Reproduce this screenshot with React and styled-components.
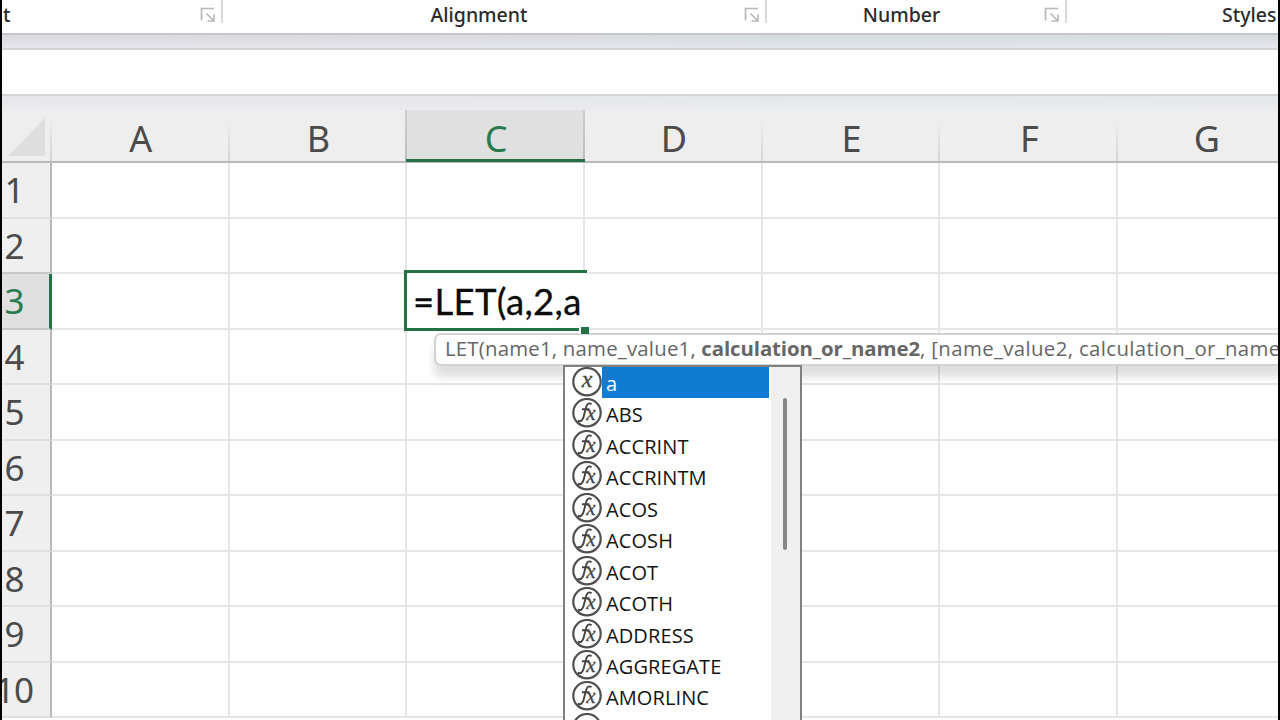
import React from "react";
import styled, { createGlobalStyle } from "styled-components";

const Global = createGlobalStyle`
  * { box-sizing: border-box; }
  html, body { margin: 0; background: #000; overflow: hidden; }
`;

const Window = styled.div`
  position: relative;
  width: 1276px;
  height: 720px;
  margin: 0 2px;
  overflow: hidden;
  display: flex;
  flex-direction: column;
  background: #fff;
  font-family: "Open Sans", "Noto Sans", sans-serif;
`;

const Ribbon = styled.div`
  display: flex;
  flex: none;
  height: 35px;
  background: #fefefe;
  border-bottom: 2px solid #c6c6ca;
`;

const RibbonGroup = styled.div`
  position: relative;
  flex: none;
  display: flex;
  justify-content: ${(p) => p.$align || "center"};
  width: ${(p) => p.$width}px;
  height: 23px;
  padding-left: ${(p) => p.$pad || 0}px;
  padding-right: ${(p) => p.$padRight || 0}px;
  border-right: 2px solid #dadada;
`;

const GroupName = styled.span`
  font-family: "Noto Sans", sans-serif;
  font-size: 19.5px;
  font-weight: 500;
  line-height: 30px;
  color: #2b2b2b;
  white-space: nowrap;
`;

const Launcher = styled.svg`
  position: absolute;
  right: 5px;
  top: 7px;
  width: 16px;
  height: 16px;
`;

const Band = styled.div`
  flex: none;
  height: ${(p) => p.$height}px;
  background: linear-gradient(180deg, ${(p) => p.$fade}), linear-gradient(90deg, #e7e6ec, #e6e7ec 40%, #e2e7eb 60%, #e4e8ec);
`;

const FormulaBar = styled.div`
  flex: none;
  height: 48px;
  background: #fefefe;
  border-top: 2px solid #d3d3d5;
  border-bottom: 2px solid #d6d6d9;
`;

const HeaderRow = styled.div`
  display: flex;
  flex: none;
  height: 53px;
  background: #eeeeee;
  border-bottom: 2px solid #b9b9b9;
`;

const SelectAll = styled.div`
  flex: none;
  display: flex;
  align-items: flex-end;
  width: 50px;
  padding: 0 0 5px 6px;
  border-right: 2px solid;
  border-image: linear-gradient(180deg, #eeeeee 20%, #cfcfcf) 1;
`;

const Corner = styled.div`
  width: 37px;
  height: 38px;
  background: #dedede;
  clip-path: polygon(100% 0, 100% 100%, 0 100%);
`;

const ColumnHeader = styled.div`
  position: relative;
  flex: none;
  width: 177.7px;
  height: ${(p) => (p.$active ? 52 : 51)}px;
  padding: 3px 0 0 2px;
  text-align: center;
  font-family: "Noto Sans", sans-serif;
  font-size: 36px;
  line-height: 51px;
  color: ${(p) => (p.$active ? "#2b7a50" : "#4b4b4b")};
  background: ${(p) => (p.$active ? "#e0e0e0" : "transparent")};
  border-right: 2px solid;
  border-image: ${(p) =>
      p.$edge ? "linear-gradient(180deg, #cfcfcf, #bbbbbb)" : "linear-gradient(180deg, #eeeeee 20%, #d3d3d3)"} 1;

  &::after {
    content: "";
    display: ${(p) => (p.$active ? "block" : "none")};
    position: absolute;
    left: -1px;
    right: -2px;
    bottom: 0;
    height: 3px;
    background: #217346;
  }
`;

const Rows = styled.div`
  flex: 1;
  display: flex;
  flex-direction: column;
`;

const Row = styled.div`
  display: flex;
  flex: none;
  height: 55.55px;
`;

const RowHeader = styled.div`
  flex: none;
  display: flex;
  justify-content: center;
  width: 50px;
  padding-right: ${(p) => (p.$active ? 23 : 24)}px;
  overflow: hidden;
  font-family: "Noto Sans", sans-serif;
  font-size: 35px;
  line-height: 54px;
  letter-spacing: -0.8px;
  color: ${(p) => (p.$active ? "#2b7a50" : "#4b4b4b")};
  background: ${(p) => (p.$active ? "#e0e0e0" : "#efefef")};
  border-right: ${(p) => (p.$active ? "3px solid #217346" : "2px solid #b9b9b9")};
  border-bottom: 2px solid ${(p) => (p.$edge ? "#c8c8c8" : "#dfdfdf")};
`;

const Cell = styled.div`
  flex: none;
  width: 177.7px;
  border-right: 2px solid #e6e6e6;
  border-bottom: 2px solid #e6e6e6;
`;

const Editor = styled.div`
  position: absolute;
  left: 402px;
  top: 270px;
  width: 183px;
  height: 61px;
  padding-left: 6px;
  background: #fefefe;
  border: solid #217346;
  border-width: 3px 0 3px 3px;
  font-family: Lato, sans-serif;
  font-size: 36.5px;
  line-height: 56px;
  letter-spacing: 0.3px;
  color: #0c0c0c;
  -webkit-text-stroke: 0.3px #0c0c0c;
  white-space: nowrap;
`;

const FillHandle = styled.div`
  position: absolute;
  left: 577px;
  top: 326px;
  width: 10px;
  height: 8px;
  background: #217346;
  border: solid #fefefe;
  border-width: 1px 0 0 2px;
`;

const Hint = styled.div`
  position: absolute;
  left: 432px;
  top: 333px;
  width: 900px;
  height: 33px;
  padding-left: 9px;
  background: #fefefe;
  border: 2px solid #d2d2d2;
  border-radius: 7px;
  box-shadow: 0 11px 10px 0 rgba(0, 0, 0, 0.13);
  font-size: 20.4px;
  line-height: 27px;
  color: #666;
  white-space: nowrap;
`;

const HintPart = styled.span`
  font-weight: ${(p) => (p.$bold ? 700 : 400)};
  letter-spacing: ${(p) => p.$track || 0}px;
`;

const Menu = styled.div`
  position: absolute;
  left: 561px;
  top: 365px;
  width: 239px;
  height: 380px;
  display: flex;
  background: #fefefe;
  border: 2px solid #808080;
`;

const Options = styled.div`
  flex: 1;
`;

const Option = styled.div`
  display: flex;
  height: 31.45px;
  padding-left: 6px;
`;

const OptionName = styled.div`
  flex: 1;
  margin-right: 2px;
  padding-left: 4px;
  font-size: 20px;
  line-height: 33px;
  letter-spacing: 0.1px;
  color: ${(p) => (p.$active ? "#fff" : "#141414")};
  background: ${(p) => (p.$active ? "#0f7bd3" : "transparent")};
`;

const Badge = styled.svg`
  flex: none;
  width: 32px;
  height: 31px;
  margin-right: -1px;
`;

const Glyph = styled.text`
  font-family: "Liberation Serif", serif;
  font-style: italic;
  font-size: ${(p) => p.$size}px;
  fill: #444;
  stroke: #444;
  stroke-width: 0.3px;
`;

const ScrollTrack = styled.div`
  flex: none;
  width: 29px;
  padding: 31px 0 0 12px;
  background: #f0f0f0;
`;

const ScrollThumb = styled.div`
  width: 4px;
  height: 152px;
  border-radius: 2px;
  background: #868686;
`;

const columns = ["A", "B", "C", "D", "E", "F", "G"];
const rows = [1, 2, 3, 4, 5, 6, 7, 8, 9, 10];
const functions = ["ABS", "ACCRINT", "ACCRINTM", "ACOS", "ACOSH", "ACOT", "ACOTH", "ADDRESS", "AGGREGATE", "AMORLINC"];

const LaunchIcon = () => (
  <Launcher viewBox="0 0 16 16" fill="none" stroke="#b9b9b9" strokeWidth="1.7">
    <path d="M1.5 13.5V1.5H14M6.500 6.500L13.500 13.500M14 7.500V14H7.500" />
  </Launcher>
);

const FunctionBadge = ({ kind }) => (
  <Badge viewBox="0 0 32 31">
    <circle cx="16" cy="14.7" r="13.7" strokeWidth="2.2" stroke="#505050" fill="#fdfdfd" />
    {kind === "variable" && <Glyph x="10.8" y="20" $size={24}>x</Glyph>}
    {kind === "function" && (
      <>
        <path
          d="M20.500 6.300C18 4.200 15.800 6 15 9.500L12.700 18.500C11.800 22 9.800 24.300 6.800 22.600M11 11.300h7.500"
          fill="none"
          stroke="#444"
          strokeWidth="1.9"
        />
        <Glyph x="15.3" y="21.5" $size={21}>x</Glyph>
      </>
    )}
  </Badge>
);

export default function App() {
  return (
    <>
      <Global />
      <Window>
        <Ribbon>
          <RibbonGroup $width={221} $align="flex-start" $pad={1}>
            <GroupName>t</GroupName>
            <LaunchIcon />
          </RibbonGroup>
          <RibbonGroup $width={544} $padRight={30}>
            <GroupName>Alignment</GroupName>
            <LaunchIcon />
          </RibbonGroup>
          <RibbonGroup $width={300} $padRight={29}>
            <GroupName>Number</GroupName>
            <LaunchIcon />
          </RibbonGroup>
          <RibbonGroup $width={300} $align="flex-start" $pad={155}>
            <GroupName>Styles</GroupName>
          </RibbonGroup>
        </Ribbon>
        <Band $height={13} $fade="rgba(0,0,0,.06), rgba(0,0,0,0)" />
        <FormulaBar />
        <Band $height={14} $fade="rgba(238,238,238,0), rgba(238,238,238,.6)" />
        <HeaderRow>
          <SelectAll>
            <Corner />
          </SelectAll>
          {columns.map((c) => (
            <ColumnHeader key={c} $active={c === "C"} $edge={c === "B" || c === "C"}>
              {c}
            </ColumnHeader>
          ))}
        </HeaderRow>
        <Rows>
          {rows.map((r) => (
            <Row key={r}>
              <RowHeader $active={r === 3} $edge={r === 2 || r === 3}>
                {r}
              </RowHeader>
              {columns.map((c) => (
                <Cell key={c} />
              ))}
            </Row>
          ))}
        </Rows>
        <Editor>=LET(a,2,a</Editor>
        <Hint>
          <HintPart $track={0.2}>LET(name1, name_value1, </HintPart>
          <HintPart $bold $track={-0.1}>calculation_or_name2</HintPart>
          <HintPart $track={0.36}>, [name_value2, calculation_or_name</HintPart>
        </Hint>
        <FillHandle />
        <Menu>
          <Options>
            <Option>
              <FunctionBadge kind="variable" />
              <OptionName $active>a</OptionName>
            </Option>
            {functions.map((name) => (
              <Option key={name}>
                <FunctionBadge kind="function" />
                <OptionName>{name}</OptionName>
              </Option>
            ))}
            <Option>
              <FunctionBadge />
            </Option>
          </Options>
          <ScrollTrack>
            <ScrollThumb />
          </ScrollTrack>
        </Menu>
      </Window>
    </>
  );
}
